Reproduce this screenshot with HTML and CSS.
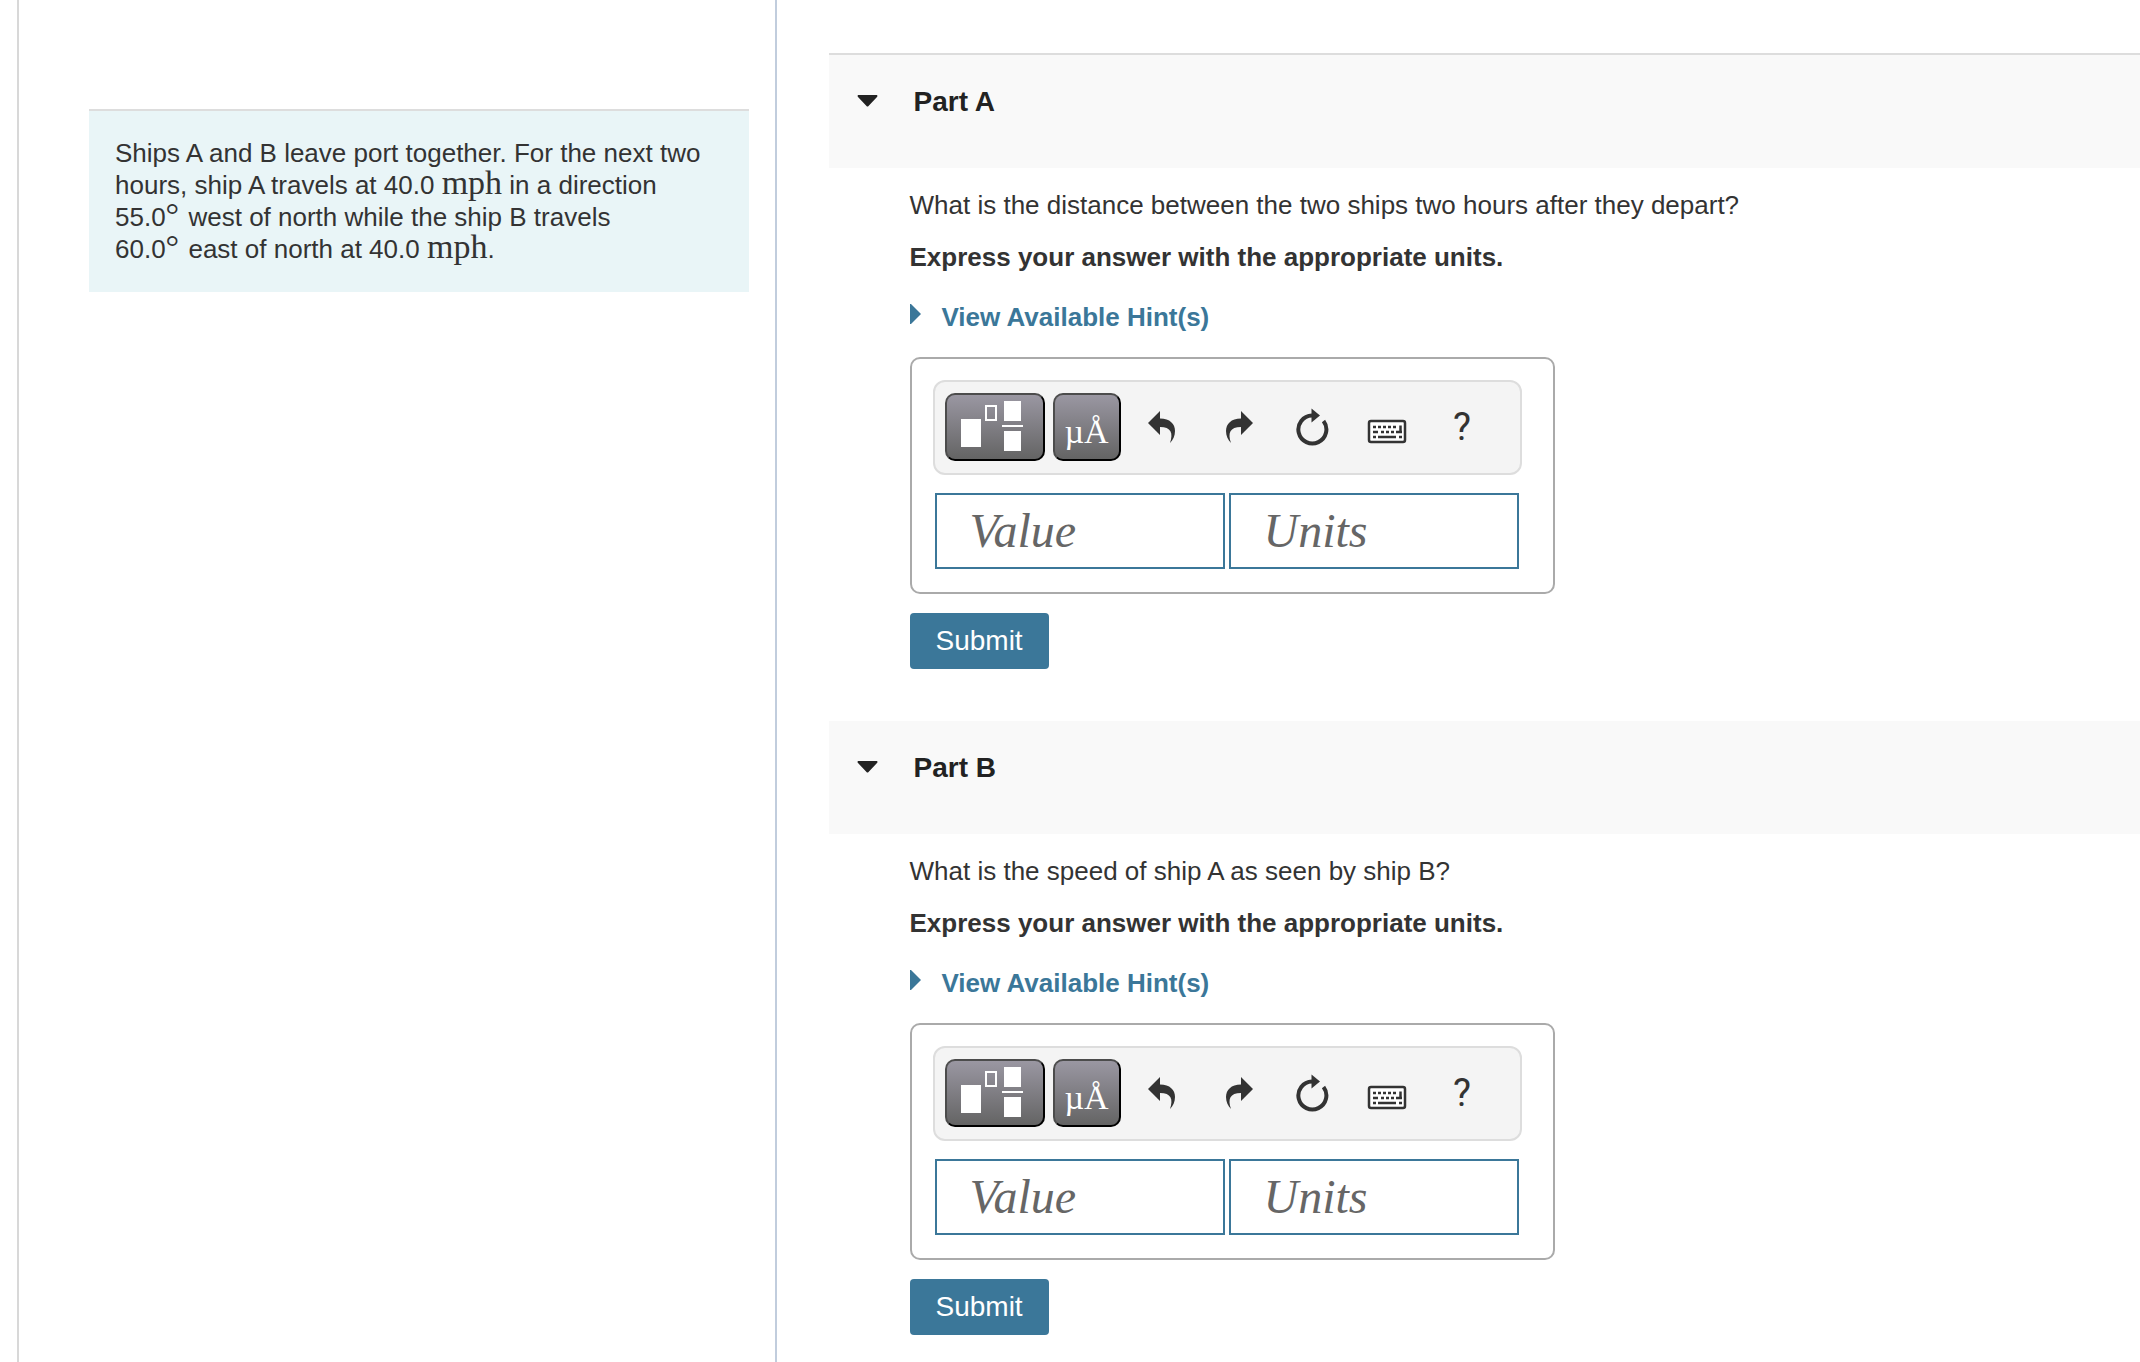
FILE: index.html
```html
<!DOCTYPE html>
<html lang="en">
<head>
    <meta charset="UTF-8">
    <meta name="viewport" content="width=device-width, initial-scale=1.0">
    <title>Ships A and B</title>
    <link rel="stylesheet" href="styles.css">
</head>
<body>

    <!-- shared toolbar icons -->
    <svg class="sprite" aria-hidden="true">
        <symbol id="icon-templates" viewBox="0 0 96 64">
            <rect x="14" y="24" width="20" height="28" fill="#fff"/>
            <rect x="39" y="11" width="10" height="14" fill="none" stroke="#fff" stroke-width="2"/>
            <rect x="57" y="6" width="17" height="20" fill="#fff"/>
            <rect x="55" y="30" width="21" height="2" fill="#fff"/>
            <rect x="57" y="36" width="17" height="20" fill="#fff"/>
        </symbol>
        <symbol id="icon-undo" viewBox="0 0 40 40">
            <path d="M6 16 L18 4 V11.500 C28 11.500 33 17 33 24 C33 29 31 33 28 36 C31.500 26 29 20 18 20 V28 Z" fill="#333"/>
        </symbol>
        <symbol id="icon-redo" viewBox="0 0 40 40">
            <path d="M36 16 L24 4 V11.500 C14 11.500 9 17 9 24 C9 29 11 33 14 36 C10.500 26 13 20 24 20 V28 Z" fill="#333"/>
        </symbol>
        <symbol id="icon-reset" viewBox="0 0 40 40">
            <path d="M31.500 14 A14 14 0 1 1 20 8.500" fill="none" stroke="#333" stroke-width="4"/>
            <path d="M19.500 1.500 L28 8.500 L19.500 15.500 Z" fill="#333"/>
        </symbol>
        <symbol id="icon-keyboard" viewBox="0 0 40 40">
            <rect x="2" y="14" width="36" height="21" rx="2" fill="#fff" stroke="#333" stroke-width="2.500"/>
            <path d="M6 20h3 M11 20h3 M16 20h3 M21 20h3 M26 20h3 M6 25h5 M14 25h3 M19 25h3 M24 25h3 M29 25h6 M6 30h3 M11 30h18 M32 30h3" fill="none" stroke="#333" stroke-width="2.500"/>
            <path d="M33.500 18.500v7" stroke="#333" stroke-width="2.500"/>
        </symbol>
    </svg>

    <div class="assignment">
        <aside class="problem">
            <div class="problem-intro">
                Ships A and B leave port together. For the next two<br>
                hours, ship A travels at 40.0 <span class="unit">mph</span> in a direction<br>
                55.0<span class="degree">°</span> west of north while the ship B travels<br>
                60.0<span class="degree">°</span> east of north at 40.0 <span class="unit">mph</span>.
            </div>
        </aside>

        <main class="parts">
            <section class="part">
                <h2 class="part-header">
                    <button class="part-toggle" type="button" aria-expanded="true">
                        <svg class="arrow-down" viewBox="0 0 22 12" aria-hidden="true"><path d="M1 0H20Q21 1 20 2L11.500 11Q10.500 12 9.500 11L1 2Q0 1 1 0Z" fill="#222"/></svg>
                        Part A
                    </button>
                </h2>
                <div class="part-body">
                    <p class="question">What is the distance between the two ships two hours after they depart?</p>
                    <p class="instructions">Express your answer with the appropriate units.</p>
                    <a class="hints" href="#hints-a">
                        <svg class="arrow-right" viewBox="0 0 11 20" aria-hidden="true"><path d="M0 0H1L11 10L1 20H0Z" fill="#3b7799"/></svg>
                        View Available Hint(s)
                    </a>
                    <form class="answer-form">
                        <div class="answer-box">
                            <div class="toolbar">
                                <button class="palette palette-templates" type="button" aria-label="Templates"><svg class="templates"><use href="#icon-templates"/></svg></button>
                                <button class="palette palette-symbols" type="button">µÅ</button>
                                <div class="tools">
                                    <button class="tool" type="button" aria-label="Undo"><svg class="icon"><use href="#icon-undo"/></svg></button>
                                    <button class="tool" type="button" aria-label="Redo"><svg class="icon"><use href="#icon-redo"/></svg></button>
                                    <button class="tool" type="button" aria-label="Reset"><svg class="icon"><use href="#icon-reset"/></svg></button>
                                    <button class="tool" type="button" aria-label="Keyboard shortcuts"><svg class="icon"><use href="#icon-keyboard"/></svg></button>
                                    <button class="tool" type="button">?</button>
                                </div>
                            </div>
                            <div class="fields">
                                <input class="field" type="text" placeholder="Value" aria-label="Part A value">
                                <input class="field" type="text" placeholder="Units" aria-label="Part A units">
                            </div>
                        </div>
                        <button class="submit" type="button">Submit</button>
                    </form>
                </div>
            </section>

            <section class="part">
                <h2 class="part-header">
                    <button class="part-toggle" type="button" aria-expanded="true">
                        <svg class="arrow-down" viewBox="0 0 22 12" aria-hidden="true"><path d="M1 0H20Q21 1 20 2L11.500 11Q10.500 12 9.500 11L1 2Q0 1 1 0Z" fill="#222"/></svg>
                        Part B
                    </button>
                </h2>
                <div class="part-body">
                    <p class="question">What is the speed of ship A as seen by ship B?</p>
                    <p class="instructions">Express your answer with the appropriate units.</p>
                    <a class="hints" href="#hints-b">
                        <svg class="arrow-right" viewBox="0 0 11 20" aria-hidden="true"><path d="M0 0H1L11 10L1 20H0Z" fill="#3b7799"/></svg>
                        View Available Hint(s)
                    </a>
                    <form class="answer-form">
                        <div class="answer-box">
                            <div class="toolbar">
                                <button class="palette palette-templates" type="button" aria-label="Templates"><svg class="templates"><use href="#icon-templates"/></svg></button>
                                <button class="palette palette-symbols" type="button">µÅ</button>
                                <div class="tools">
                                    <button class="tool" type="button" aria-label="Undo"><svg class="icon"><use href="#icon-undo"/></svg></button>
                                    <button class="tool" type="button" aria-label="Redo"><svg class="icon"><use href="#icon-redo"/></svg></button>
                                    <button class="tool" type="button" aria-label="Reset"><svg class="icon"><use href="#icon-reset"/></svg></button>
                                    <button class="tool" type="button" aria-label="Keyboard shortcuts"><svg class="icon"><use href="#icon-keyboard"/></svg></button>
                                    <button class="tool" type="button">?</button>
                                </div>
                            </div>
                            <div class="fields">
                                <input class="field" type="text" placeholder="Value" aria-label="Part B value">
                                <input class="field" type="text" placeholder="Units" aria-label="Part B units">
                            </div>
                        </div>
                        <button class="submit" type="button">Submit</button>
                    </form>
                </div>
            </section>
        </main>
    </div>

</body>
</html>
```
FILE: styles.css
```css
* {
    box-sizing: border-box;
}
body {
    margin: 0;
    font-family: "Liberation Sans", Arial, sans-serif;
    font-size: 26px;
    line-height: 32px;
    color: #333;
    background-color: #fff;
}
button {
    font-family: inherit;
    cursor: pointer;
}
.sprite {
    display: none;
}
.assignment {
    display: grid;
    grid-template-columns: minmax(0, 5fr) minmax(0, 9fr);
    min-height: 100vh;
    margin-left: 17px;
    border-left: 2px solid #d8d8d8;
}

/* Left column with the problem text */
.problem {
    padding: 109px 26px 0 70px;
    border-right: 2px solid #c1cddd;
}
.problem-intro {
    padding: 26px 26px 27px;
    background-color: #e9f5f7;
    border-top: 2px solid #ddd;
}
.unit,
.degree {
    font-family: "Liberation Serif", "Times New Roman", serif;
    font-size: 34px;
    line-height: 1px;
}
.degree {
    margin-right: 2px;
}

/* Right column with the parts */
.parts {
    padding: 53px 0 26px 52px;
}
.part + .part {
    margin-top: 52px;
}
.part-header {
    margin: 0;
    padding: 31px 28px 50px;
    font-size: 28px;
    line-height: 32px;
    background-color: #f9f9f9;
}
.part:first-child .part-header {
    border-top: 2px solid #ddd;
}
.part-toggle {
    display: flex;
    align-items: center;
    gap: 35px;
    padding: 0;
    border: none;
    background: none;
    color: #222;
    font-size: inherit;
    font-weight: bold;
    line-height: inherit;
}
.arrow-down {
    width: 22px;
    height: 12px;
    margin-bottom: 2px;
}
.part-body {
    padding: 21px 26px 0 81px;
}
.question,
.instructions {
    margin: 0 0 20px;
}
.instructions {
    margin-bottom: 28px;
    font-weight: bold;
}
.hints {
    display: inline-flex;
    gap: 21px;
    color: #3b7799;
    font-weight: bold;
    text-decoration: none;
    vertical-align: top;
}
.arrow-right {
    width: 11px;
    height: 20px;
    margin-top: 3px;
}
.answer-form {
    margin-top: 24px;
}
.answer-box {
    max-width: 645px;
    padding: 21px 31px 23px 21px;
    border: 2px solid #aaa;
    border-radius: 10px;
}
.toolbar {
    display: flex;
    gap: 8px;
    padding: 11px 10px 12px;
    background-color: #f4f4f4;
    border: 2px solid #ddd;
    border-radius: 12px;
}
.palette {
    height: 68px;
    padding: 0;
    border: 2px solid;
    border-color: #4c4c4c #000 #000 #4c4c4c;
    border-radius: 10px;
    background: linear-gradient(#9a97a2, #646464);
    color: #fff;
}
.palette-templates {
    width: 100px;
}
.palette-symbols {
    width: 68px;
    padding-top: 10px;
    font-family: "Liberation Serif", "Times New Roman", serif;
    font-size: 34px;
}
.templates {
    display: block;
    width: 96px;
    height: 64px;
}
.tools {
    display: flex;
    margin-left: -4px;
}
.tool {
    display: flex;
    align-items: center;
    justify-content: center;
    width: 75px;
    padding: 0;
    border: none;
    background: none;
    color: #333;
    font-family: Roboto, sans-serif;
    font-size: 38px;
}
.icon {
    width: 40px;
    height: 40px;
}
.fields {
    display: flex;
    gap: 4px;
    margin: 18px 3px 0 2px;
}
.field {
    flex: 1;
    min-width: 0;
    height: 76px;
    padding: 0 33px 2px;
    border: 2px solid #3b7799;
    border-radius: 0;
    font-family: "Liberation Serif", "Times New Roman", serif;
    font-size: 48px;
    font-style: italic;
}
.field::placeholder {
    color: #666;
}
.submit {
    height: 56px;
    margin-top: 19px;
    padding: 0 26px;
    border: none;
    border-radius: 4px;
    background-color: #3b7799;
    color: #fff;
    font-size: 28px;
}
```
